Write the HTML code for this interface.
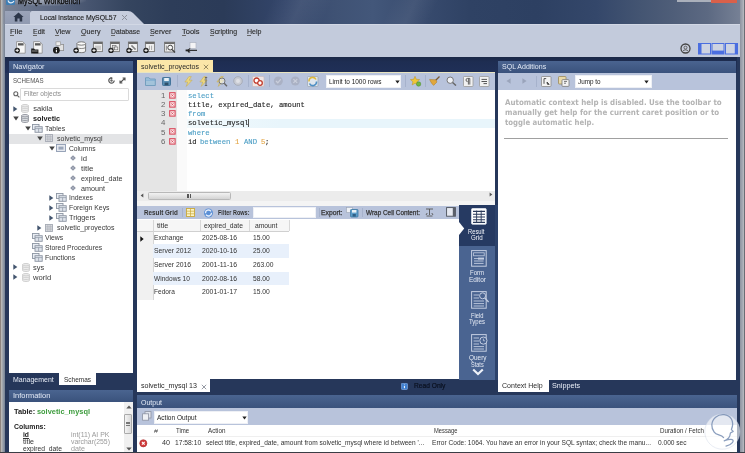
<!DOCTYPE html>
<html lang="en"><head><meta charset="utf-8"><title>MySQL Workbench</title>
<style>
html,body{margin:0;padding:0;}
body{width:745px;height:453px;overflow:hidden;background:#26375a;position:relative;font-family:"Liberation Sans",sans-serif;}
#app{position:absolute;left:0;top:0;width:745px;height:453px;overflow:hidden;will-change:transform;}
#app div,#app span,#app svg{position:absolute;display:block;}
#app span.t{white-space:pre;line-height:10px;height:10px;transform-origin:0 50%;}
</style></head>
<body><div id="app">
<div style="left:0px;top:0px;width:745px;height:24px;background:linear-gradient(90deg,#7d8698 0%,#6c778d 3%,#5b6780 7%,#46546f 12%,#35455f 17%,#2d3d59 23%,#2b3b58 30%,#33456a 38%,#3f5274 45%,#43577a 50%,#394c6f 56%,#2f4264 63%,#2d4062 72%,#34476a 80%,#445572 86%,#4e5d78 90%,#5c6982 95%,#7a8498 100%);"></div>
<div style="left:0px;top:0px;width:745px;height:24px;background:linear-gradient(115deg,rgba(255,255,255,0) 36%,rgba(255,255,255,0.07) 40%,rgba(255,255,255,0) 44%,rgba(255,255,255,0) 52%,rgba(255,255,255,0.06) 55%,rgba(255,255,255,0) 58%);"></div>
<div style="left:8px;top:-7px;width:78px;height:13px;background:radial-gradient(ellipse at center,rgba(255,255,255,0.42) 0%,rgba(255,255,255,0.25) 45%,rgba(255,255,255,0) 75%);"></div>
<div style="left:6px;top:-6px;width:9px;height:10.5px;background:#3f7fb5;border-radius:1px;"></div>
<svg style="left:7px;top:0px;" width="8" height="5" viewBox="0 0 8 5"><path d="M1 0.5 C2 3.5 5 3.8 7 1.2" stroke="#e8f0f8" stroke-width="1.2" fill="none"/></svg>
<span class="t" style="left:17.8px;top:-4px;font-size:8.84px;color:#0c0c0c;font-family:'Liberation Sans', sans-serif;transform:scaleX(0.818);-webkit-text-stroke:0.3px #0c0c0c;">MySQL Workbench</span>
<div style="left:677px;top:0px;width:35px;height:2px;background:#aab0bb;"></div>
<div style="left:711px;top:0px;width:26px;height:2.5px;background:#d9604a;"></div>
<div style="left:5px;top:11px;width:25px;height:13px;background:linear-gradient(#9ba4b9,#909ab1);"></div>
<svg style="left:13px;top:12px;" width="11" height="10" viewBox="0 0 11 10"><path d="M5.5 0.6 L0.4 5 H1.8 V9.4 H4.4 V6.4 H6.6 V9.4 H9.2 V5 H10.6 Z" fill="#2c3649"/></svg>
<svg style="left:30px;top:11px;" width="116" height="13" viewBox="0 0 116 13"><path d="M0 13 V2 Q0 0 2 0 H98 Q101 0 103 2 L114 13 Z" fill="#c6cddd"/></svg>
<span class="t" style="left:39.5px;top:13px;font-size:7.99px;color:#1e1e1e;font-family:'Liberation Sans', sans-serif;transform:scaleX(0.862);-webkit-text-stroke:0.15px #1e1e1e;">Local instance MySQL57</span>
<svg style="left:121px;top:14px;" width="7" height="7" viewBox="0 0 7 7"><path d="M1 1 L6 6 M6 1 L1 6" stroke="#8a8f9a" stroke-width="1" fill="none"/></svg>
<div style="left:5px;top:24px;width:735px;height:32.5px;background:#c3cbdc;"></div>
<div style="left:5px;top:24px;width:735px;height:0.8px;background:rgba(255,255,255,0.25);"></div>
<span class="t" style="left:10px;top:27px;font-size:7.99px;color:#2a2a2a;font-family:'Liberation Sans', sans-serif;transform:scaleX(0.971);-webkit-text-stroke:0.12px #2a2a2a;">File</span>
<div style="left:10px;top:35.1px;width:4px;height:0.7px;background:#666;"></div>
<span class="t" style="left:32.5px;top:27px;font-size:7.99px;color:#2a2a2a;font-family:'Liberation Sans', sans-serif;transform:scaleX(0.872);-webkit-text-stroke:0.12px #2a2a2a;">Edit</span>
<div style="left:32.5px;top:35.1px;width:4px;height:0.7px;background:#666;"></div>
<span class="t" style="left:55px;top:27px;font-size:7.99px;color:#2a2a2a;font-family:'Liberation Sans', sans-serif;transform:scaleX(0.903);-webkit-text-stroke:0.12px #2a2a2a;">View</span>
<div style="left:55px;top:35.1px;width:4px;height:0.7px;background:#666;"></div>
<span class="t" style="left:81px;top:27px;font-size:7.99px;color:#2a2a2a;font-family:'Liberation Sans', sans-serif;transform:scaleX(0.897);-webkit-text-stroke:0.12px #2a2a2a;">Query</span>
<div style="left:81px;top:35.1px;width:4px;height:0.7px;background:#666;"></div>
<span class="t" style="left:111px;top:27px;font-size:7.99px;color:#2a2a2a;font-family:'Liberation Sans', sans-serif;transform:scaleX(0.848);-webkit-text-stroke:0.12px #2a2a2a;">Database</span>
<div style="left:111px;top:35.1px;width:4px;height:0.7px;background:#666;"></div>
<span class="t" style="left:150px;top:27px;font-size:7.99px;color:#2a2a2a;font-family:'Liberation Sans', sans-serif;transform:scaleX(0.914);-webkit-text-stroke:0.12px #2a2a2a;">Server</span>
<div style="left:150px;top:35.1px;width:4px;height:0.7px;background:#666;"></div>
<span class="t" style="left:182px;top:27px;font-size:7.99px;color:#2a2a2a;font-family:'Liberation Sans', sans-serif;transform:scaleX(0.939);-webkit-text-stroke:0.12px #2a2a2a;">Tools</span>
<div style="left:182px;top:35.1px;width:4px;height:0.7px;background:#666;"></div>
<span class="t" style="left:209.5px;top:27px;font-size:7.99px;color:#2a2a2a;font-family:'Liberation Sans', sans-serif;transform:scaleX(0.869);-webkit-text-stroke:0.12px #2a2a2a;">Scripting</span>
<div style="left:209.5px;top:35.1px;width:4px;height:0.7px;background:#666;"></div>
<span class="t" style="left:247px;top:27px;font-size:7.99px;color:#2a2a2a;font-family:'Liberation Sans', sans-serif;transform:scaleX(0.883);-webkit-text-stroke:0.12px #2a2a2a;">Help</span>
<div style="left:247px;top:35.1px;width:4px;height:0.7px;background:#666;"></div>
<svg style="left:13.6px;top:41px;" width="12" height="13" viewBox="0 0 12 13"><path d="M2.6 0.6 H8.6 L11.2 3 V12.2 H2.6 Z" fill="#f6f6f6" stroke="#8a8a8a" stroke-width="0.8"/><rect x="4" y="2.2" width="5.6" height="2.3" fill="#5a5a5a"/><circle cx="3.2" cy="9.4" r="2.7" fill="#1d1d1d"/><path d="M1.6 9.4 H4.800000000000001 M3.2 7.800000000000001 V11.0" stroke="#f2f2f2" stroke-width="1"/></svg>
<svg style="left:31.4px;top:41px;" width="12" height="13" viewBox="0 0 12 13"><path d="M2.6 0.6 H8.6 L11.2 3 V12.2 H2.6 Z" fill="#f6f6f6" stroke="#8a8a8a" stroke-width="0.8"/><rect x="4" y="2.2" width="5.6" height="2.3" fill="#5a5a5a"/><path d="M0.2 12.4 V7.6 H3 L4 8.6 H7.4 V12.4 Z" fill="#1d1d1d"/><path d="M1 10 H6.6" stroke="#ddd" stroke-width="0.6"/></svg>
<svg style="left:52px;top:41px;" width="13" height="13" viewBox="0 0 13 13"><rect x="6" y="3.4" width="5.6" height="6.2" fill="#e2e2e2" stroke="#8f8f8f" stroke-width="0.8"/><rect x="4" y="0.8" width="4.4" height="3.6" fill="#ededed" stroke="#9a9a9a" stroke-width="0.7"/><circle cx="4.4" cy="9.2" r="3.4" fill="#1b1b1b"/><path d="M4.4 7.2 V7.9 M4.4 8.7 V11.2" stroke="#fff" stroke-width="1.1"/></svg>
<svg style="left:73px;top:41px;" width="14" height="13" viewBox="0 0 14 13"><path d="M4 2.4 V10 C4 12.2 12.6 12.2 12.6 10 V2.4" fill="#f4f4f4" stroke="#6c6c6c" stroke-width="0.9"/><ellipse cx="8.3" cy="2.5" rx="4.3" ry="1.7" fill="#fbfbfb" stroke="#6c6c6c" stroke-width="0.9"/><path d="M4 6.1 C4 8 12.6 8 12.6 6.1" fill="none" stroke="#6c6c6c" stroke-width="0.8"/><circle cx="3.1" cy="9.5" r="2.7" fill="#1d1d1d"/><path d="M1.5 9.5 H4.7 M3.1 7.9 V11.1" stroke="#f2f2f2" stroke-width="1"/></svg>
<svg style="left:90.6px;top:41px;" width="12" height="13" viewBox="0 0 12 13"><rect x="2.4" y="1" width="9" height="9.6" fill="#f1f1f1" stroke="#7a7a7a" stroke-width="0.9"/><rect x="2.4" y="1" width="9" height="2" fill="#6a6a6a"/><path d="M5 4.6 V9 M7 4.6 V9 M9 4.6 V9" stroke="#999" stroke-width="0.9"/><circle cx="3" cy="9.4" r="2.7" fill="#1d1d1d"/><path d="M1.4 9.4 H4.6 M3 7.800000000000001 V11.0" stroke="#f2f2f2" stroke-width="1"/></svg>
<svg style="left:108.4px;top:41px;" width="12" height="13" viewBox="0 0 12 13"><rect x="2.4" y="1" width="9" height="9.6" fill="#f1f1f1" stroke="#7a7a7a" stroke-width="0.9"/><rect x="2.4" y="1" width="9" height="2" fill="#6a6a6a"/><rect x="4.6" y="4.4" width="3.4" height="2.6" fill="#ddd" stroke="#666" stroke-width="0.6"/><rect x="6.4" y="6" width="3.4" height="2.8" fill="#eee" stroke="#666" stroke-width="0.6"/><circle cx="3" cy="9.4" r="2.7" fill="#1d1d1d"/><path d="M1.4 9.4 H4.6 M3 7.800000000000001 V11.0" stroke="#f2f2f2" stroke-width="1"/></svg>
<svg style="left:125.6px;top:41px;" width="12" height="13" viewBox="0 0 12 13"><rect x="2.4" y="1" width="9" height="9.6" fill="#f1f1f1" stroke="#7a7a7a" stroke-width="0.9"/><rect x="2.4" y="1" width="9" height="2" fill="#6a6a6a"/><path d="M5 5 H7 V7 H9 V9" stroke="#555" stroke-width="0.9" fill="none"/><path d="M5 8.6 H6.6" stroke="#555" stroke-width="0.9"/><circle cx="3" cy="9.4" r="2.7" fill="#1d1d1d"/><path d="M1.4 9.4 H4.6 M3 7.800000000000001 V11.0" stroke="#f2f2f2" stroke-width="1"/></svg>
<svg style="left:143px;top:41px;" width="12" height="13" viewBox="0 0 12 13"><rect x="2.4" y="1" width="9" height="9.6" fill="#f1f1f1" stroke="#7a7a7a" stroke-width="0.9"/><rect x="2.4" y="1" width="9" height="2" fill="#6a6a6a"/><path d="M6.4 4.6 V9 M8.6 4.6 V9" stroke="#aaa" stroke-width="1"/><circle cx="3" cy="9.4" r="2.7" fill="#1d1d1d"/><path d="M1.4 9.4 H4.6 M3 7.800000000000001 V11.0" stroke="#f2f2f2" stroke-width="1"/></svg>
<svg style="left:164px;top:41px;" width="13" height="13" viewBox="0 0 13 13"><rect x="0.6" y="1.2" width="10" height="9.8" fill="#efefef" stroke="#777" stroke-width="0.9"/><rect x="0.6" y="1.2" width="10" height="1.8" fill="#6a6a6a"/><circle cx="6.2" cy="6.6" r="2.4" fill="#fafafa" stroke="#444" stroke-width="1"/><path d="M8 8.4 L11 11.4" stroke="#444" stroke-width="1.4"/><path d="M2.4 4.6 V9.4" stroke="#777" stroke-width="0.8"/></svg>
<svg style="left:185px;top:41px;" width="14" height="13" viewBox="0 0 14 13"><rect x="5" y="1.6" width="6" height="6" fill="#f4f4f6" stroke="#aeb4c2" stroke-width="0.7"/><path d="M12 9.4 H3 M5.2 7.4 L2.6 9.4 L5.2 11.4" stroke="#333" stroke-width="1.1" fill="none"/><path d="M0.6 9.4 H4" stroke="#222" stroke-width="1.8"/><path d="M3 9.4 L3.8 11.6" stroke="#222" stroke-width="1"/></svg>
<svg style="left:680px;top:42.5px;" width="11" height="11" viewBox="0 0 11 11"><circle cx="5.5" cy="5.5" r="4.5" fill="#c9cfdd" stroke="#444" stroke-width="1.3"/><circle cx="5.5" cy="4.6" r="1.5" fill="none" stroke="#555" stroke-width="0.9"/><path d="M2.8 8.2 C3.5 6.4 7.5 6.4 8.2 8.2" fill="none" stroke="#555" stroke-width="0.9"/></svg>
<svg style="left:698px;top:42.5px;" width="41" height="12" viewBox="0 0 41 12">
<rect x="0.5" y="0.5" width="12" height="10.5" fill="#cdd3e2" stroke="#4a6ee0" stroke-width="1"/><rect x="0.5" y="0.5" width="3" height="10.5" fill="#4a6ee0"/>
<rect x="14" y="0.5" width="12" height="10.5" fill="#cdd3e2" stroke="#4a6ee0" stroke-width="1"/><rect x="14" y="7.6" width="12" height="3.4" fill="#4a6ee0"/>
<rect x="27.5" y="0.5" width="12" height="10.5" fill="#cdd3e2" stroke="#4a6ee0" stroke-width="1"/><rect x="36.8" y="0.5" width="2.7" height="10.5" fill="#4a6ee0"/>
</svg>
<div style="left:5px;top:56.5px;width:735px;height:397px;background:#26375a;"></div>
<div style="left:5px;top:56.5px;width:735px;height:16.5px;background:linear-gradient(#1b2947,#1e2d52 30%,#203058);"></div>
<div style="left:8.7px;top:61px;width:124.1px;height:312.3px;background:#fff;"></div>
<div style="left:8.7px;top:389.5px;width:124.1px;height:63.5px;background:#fff;"></div>
<div style="left:136.5px;top:72.3px;width:358.8px;height:307.2px;background:#fff;"></div>
<div style="left:497.8px;top:61px;width:238.7px;height:318.5px;background:#fff;"></div>
<div style="left:136.5px;top:395px;width:603.5px;height:58px;background:#fff;"></div>
<div style="left:0px;top:0px;width:2.6px;height:453px;background:linear-gradient(90deg,#8e847e 0,#8e847e 0.9px,#b6b6b6 1.2px,#b9b9b9 2.2px,#9aa0a8 2.6px);"></div>
<div style="left:2.6px;top:24px;width:2.4px;height:429px;background:linear-gradient(90deg,#939ca9,#8792a1 60%,#6d7888);"></div>
<div style="left:2.6px;top:0px;width:2.4px;height:24px;background:linear-gradient(90deg,#8d95a3,#7d8698);"></div>
<div style="left:740px;top:0px;width:5px;height:453px;background:linear-gradient(90deg,#8d93a0,#a4a9b3 50%,#c9cbd0 65%,#8a8d95 80%,#4a4d55);"></div>
<div style="left:8.7px;top:61px;width:124.1px;height:12px;background:linear-gradient(#4a6490,#3a527c);"></div>
<span class="t" style="left:13px;top:62px;font-size:7.99px;color:#e3eaf6;font-family:'Liberation Sans', sans-serif;transform:scaleX(0.922);">Navigator</span>
<div style="left:8.7px;top:73px;width:124.1px;height:300.3px;background:#fff;"></div>
<span class="t" style="left:12.5px;top:76px;font-size:7.52px;color:#555;font-family:'Liberation Sans', sans-serif;transform:scaleX(0.821);">SCHEMAS</span>
<svg style="left:108px;top:77px;" width="7" height="7" viewBox="0 0 7 7"><path d="M3.5 0.8 A2.7 2.7 0 1 0 6.2 3.5" fill="none" stroke="#555" stroke-width="1.2"/><path d="M2.6 0 L5 1 L3 2.6 Z" fill="#555"/><circle cx="3.5" cy="3.5" r="1.2" fill="#666"/></svg>
<svg style="left:119px;top:77px;" width="7" height="7" viewBox="0 0 7 7"><path d="M1 6 L6 1 M3.6 1 H6 V3.4 M1 3.6 V6 H3.4" stroke="#555" stroke-width="1.1" fill="none"/></svg>
<div style="left:20px;top:87.5px;width:108.5px;height:13px;background:#fff;border:1px solid #dadada;box-sizing:border-box;border-radius:1px;"></div>
<svg style="left:12.5px;top:90.5px;" width="7" height="7" viewBox="0 0 7 7"><circle cx="2.8" cy="2.8" r="2" fill="none" stroke="#666" stroke-width="1.1"/><path d="M4.3 4.3 L6.4 6.4" stroke="#666" stroke-width="1.2"/></svg>
<span class="t" style="left:23.5px;top:89px;font-size:7.52px;color:#8a8a8a;font-family:'Liberation Sans', sans-serif;transform:scaleX(0.868);">Filter objects</span>
<div style="left:8.7px;top:134.29999999999998px;width:124.1px;height:9.6px;background:#e3e4e6;"></div>
<svg style="left:13px;top:105.7px;" width="5" height="6" viewBox="0 0 5 6"><path d="M0.3 0.3 L4.4 3 L0.3 5.7 Z" fill="#44566f"/></svg>
<svg style="left:21px;top:104.2px;" width="8" height="9" viewBox="0 0 8 9"><path d="M0.6 1.6 V7.4 C0.6 8.8 7.4 8.8 7.4 7.4 V1.6" fill="#eeeeee" stroke="#c9c9c9" stroke-width="0.9"/><ellipse cx="4" cy="1.7" rx="3.4" ry="1.2" fill="#eeeeee" stroke="#c9c9c9" stroke-width="0.9"/><path d="M0.6 3.6 C0.6 5 7.4 5 7.4 3.6 M0.6 5.5 C0.6 6.9 7.4 6.9 7.4 5.5" fill="none" stroke="#c9c9c9" stroke-width="0.8"/></svg>
<span class="t" style="left:33.3px;top:104px;font-size:7.52px;color:#3a3a3a;font-family:'Liberation Sans', sans-serif;">sakila</span>
<svg style="left:12.7px;top:116.12px;" width="6" height="5" viewBox="0 0 6 5"><path d="M0.2 0.5 H5.8 L3 4.6 Z" fill="#444"/></svg>
<svg style="left:21px;top:114.12px;" width="8" height="9" viewBox="0 0 8 9"><path d="M0.6 1.6 V7.4 C0.6 8.8 7.4 8.8 7.4 7.4 V1.6" fill="#e0e2e6" stroke="#8c9099" stroke-width="0.9"/><ellipse cx="4" cy="1.7" rx="3.4" ry="1.2" fill="#e0e2e6" stroke="#8c9099" stroke-width="0.9"/><path d="M0.6 3.6 C0.6 5 7.4 5 7.4 3.6 M0.6 5.5 C0.6 6.9 7.4 6.9 7.4 5.5" fill="none" stroke="#8c9099" stroke-width="0.8"/></svg>
<span class="t" style="left:33.3px;top:114px;font-size:7.52px;color:#222;font-family:'Liberation Sans', sans-serif;font-weight:700;transform:scaleX(0.971);">solvetic</span>
<svg style="left:25px;top:126.03999999999999px;" width="6" height="5" viewBox="0 0 6 5"><path d="M0.2 0.5 H5.8 L3 4.6 Z" fill="#444"/></svg>
<svg style="left:32px;top:124.03999999999999px;" width="11" height="9" viewBox="0 0 11 9"><rect x="0.5" y="0.5" width="6.5" height="5" fill="#e9edf3" stroke="#8d95a3" stroke-width="0.9"/><rect x="3" y="2.7" width="7.2" height="5.6" fill="#dfe4ec" stroke="#8d95a3" stroke-width="0.9"/><path d="M3 4.6 H10.2 M6.6 4.6 V8.3" stroke="#8d95a3" stroke-width="0.7"/></svg>
<span class="t" style="left:45.3px;top:124px;font-size:7.52px;color:#3a3a3a;font-family:'Liberation Sans', sans-serif;transform:scaleX(0.929);">Tables</span>
<svg style="left:37px;top:135.95999999999998px;" width="6" height="5" viewBox="0 0 6 5"><path d="M0.2 0.5 H5.8 L3 4.6 Z" fill="#444"/></svg>
<svg style="left:45px;top:134.45999999999998px;" width="8" height="8" viewBox="0 0 8 8"><rect x="0.5" y="0.5" width="7" height="7" fill="#d8dade" stroke="#a6abb4" stroke-width="0.9"/><path d="M0.5 2.8 H7.5 M0.5 5.1 H7.5 M2.8 0.5 V7.5 M5.2 0.5 V7.5" stroke="#a6abb4" stroke-width="0.6"/></svg>
<span class="t" style="left:57px;top:134px;font-size:7.52px;color:#3a3a3a;font-family:'Liberation Sans', sans-serif;transform:scaleX(0.931);">solvetic_mysql</span>
<svg style="left:49px;top:145.88px;" width="6" height="5" viewBox="0 0 6 5"><path d="M0.2 0.5 H5.8 L3 4.6 Z" fill="#444"/></svg>
<svg style="left:56px;top:144.38px;" width="10" height="8" viewBox="0 0 10 8"><rect x="0.5" y="0.5" width="9" height="7" fill="#e6e9ef" stroke="#8e9bb1" stroke-width="0.9"/><rect x="2.5" y="2.6" width="5" height="3" fill="#9aa6ba"/></svg>
<span class="t" style="left:69px;top:144px;font-size:7.52px;color:#3a3a3a;font-family:'Liberation Sans', sans-serif;transform:scaleX(0.894);">Columns</span>
<svg style="left:69.6px;top:154.79999999999998px;" width="6" height="6" viewBox="0 0 6 6"><path d="M3 0.2 L5.8 3 L3 5.8 L0.2 3 Z" fill="#8b92a3"/><path d="M3 1.6 L4.4 3 L3 4.4 L1.6 3 Z" fill="#a9afbd"/></svg>
<span class="t" style="left:80.5px;top:154px;font-size:7.52px;color:#3a3a3a;font-family:'Liberation Sans', sans-serif;transform:scaleX(1.024);">id</span>
<svg style="left:69.6px;top:164.71999999999997px;" width="6" height="6" viewBox="0 0 6 6"><path d="M3 0.2 L5.8 3 L3 5.8 L0.2 3 Z" fill="#8b92a3"/><path d="M3 1.6 L4.4 3 L3 4.4 L1.6 3 Z" fill="#a9afbd"/></svg>
<span class="t" style="left:80.5px;top:164px;font-size:7.52px;color:#3a3a3a;font-family:'Liberation Sans', sans-serif;transform:scaleX(1.068);">title</span>
<svg style="left:69.6px;top:174.64px;" width="6" height="6" viewBox="0 0 6 6"><path d="M3 0.2 L5.8 3 L3 5.8 L0.2 3 Z" fill="#8b92a3"/><path d="M3 1.6 L4.4 3 L3 4.4 L1.6 3 Z" fill="#a9afbd"/></svg>
<span class="t" style="left:80.5px;top:174px;font-size:7.52px;color:#3a3a3a;font-family:'Liberation Sans', sans-serif;transform:scaleX(0.955);">expired_date</span>
<svg style="left:69.6px;top:184.56px;" width="6" height="6" viewBox="0 0 6 6"><path d="M3 0.2 L5.8 3 L3 5.8 L0.2 3 Z" fill="#8b92a3"/><path d="M3 1.6 L4.4 3 L3 4.4 L1.6 3 Z" fill="#a9afbd"/></svg>
<span class="t" style="left:80.5px;top:184px;font-size:7.52px;color:#3a3a3a;font-family:'Liberation Sans', sans-serif;transform:scaleX(0.957);">amount</span>
<svg style="left:49px;top:194.78px;" width="5" height="6" viewBox="0 0 5 6"><path d="M0.3 0.3 L4.4 3 L0.3 5.7 Z" fill="#44566f"/></svg>
<svg style="left:55.5px;top:192.98px;" width="11" height="9" viewBox="0 0 11 9"><rect x="0.5" y="0.5" width="6.5" height="5" fill="#e9edf3" stroke="#8d95a3" stroke-width="0.9"/><rect x="3" y="2.7" width="7.2" height="5.6" fill="#dfe4ec" stroke="#8d95a3" stroke-width="0.9"/><path d="M3 4.6 H10.2 M6.6 4.6 V8.3" stroke="#8d95a3" stroke-width="0.7"/></svg>
<span class="t" style="left:69px;top:193px;font-size:7.52px;color:#3a3a3a;font-family:'Liberation Sans', sans-serif;transform:scaleX(0.912);">Indexes</span>
<svg style="left:49px;top:204.7px;" width="5" height="6" viewBox="0 0 5 6"><path d="M0.3 0.3 L4.4 3 L0.3 5.7 Z" fill="#44566f"/></svg>
<svg style="left:55.5px;top:202.89999999999998px;" width="11" height="9" viewBox="0 0 11 9"><rect x="0.5" y="0.5" width="6.5" height="5" fill="#e9edf3" stroke="#8d95a3" stroke-width="0.9"/><rect x="3" y="2.7" width="7.2" height="5.6" fill="#dfe4ec" stroke="#8d95a3" stroke-width="0.9"/><path d="M3 4.6 H10.2 M6.6 4.6 V8.3" stroke="#8d95a3" stroke-width="0.7"/></svg>
<span class="t" style="left:69px;top:203px;font-size:7.52px;color:#3a3a3a;font-family:'Liberation Sans', sans-serif;transform:scaleX(0.915);">Foreign Keys</span>
<svg style="left:49px;top:214.62px;" width="5" height="6" viewBox="0 0 5 6"><path d="M0.3 0.3 L4.4 3 L0.3 5.7 Z" fill="#44566f"/></svg>
<svg style="left:55.5px;top:212.82px;" width="11" height="9" viewBox="0 0 11 9"><rect x="0.5" y="0.5" width="6.5" height="5" fill="#e9edf3" stroke="#8d95a3" stroke-width="0.9"/><rect x="3" y="2.7" width="7.2" height="5.6" fill="#dfe4ec" stroke="#8d95a3" stroke-width="0.9"/><path d="M3 4.6 H10.2 M6.6 4.6 V8.3" stroke="#8d95a3" stroke-width="0.7"/></svg>
<span class="t" style="left:69px;top:213px;font-size:7.52px;color:#3a3a3a;font-family:'Liberation Sans', sans-serif;transform:scaleX(0.971);">Triggers</span>
<svg style="left:37px;top:224.54px;" width="5" height="6" viewBox="0 0 5 6"><path d="M0.3 0.3 L4.4 3 L0.3 5.7 Z" fill="#44566f"/></svg>
<svg style="left:45px;top:223.54px;" width="8" height="8" viewBox="0 0 8 8"><rect x="0.5" y="0.5" width="7" height="7" fill="#d8dade" stroke="#a6abb4" stroke-width="0.9"/><path d="M0.5 2.8 H7.5 M0.5 5.1 H7.5 M2.8 0.5 V7.5 M5.2 0.5 V7.5" stroke="#a6abb4" stroke-width="0.6"/></svg>
<span class="t" style="left:57px;top:223px;font-size:7.52px;color:#3a3a3a;font-family:'Liberation Sans', sans-serif;transform:scaleX(0.930);">solvetic_proyectos</span>
<svg style="left:32px;top:232.96px;" width="11" height="9" viewBox="0 0 11 9"><rect x="0.5" y="0.5" width="6.5" height="5" fill="#e9edf3" stroke="#8d95a3" stroke-width="0.9"/><rect x="3" y="2.7" width="7.2" height="5.6" fill="#dfe4ec" stroke="#8d95a3" stroke-width="0.9"/><path d="M3 4.6 H10.2 M6.6 4.6 V8.3" stroke="#8d95a3" stroke-width="0.7"/></svg>
<span class="t" style="left:45.3px;top:233px;font-size:7.52px;color:#3a3a3a;font-family:'Liberation Sans', sans-serif;transform:scaleX(0.914);">Views</span>
<svg style="left:32px;top:242.88px;" width="11" height="9" viewBox="0 0 11 9"><rect x="0.5" y="0.5" width="6.5" height="5" fill="#e9edf3" stroke="#8d95a3" stroke-width="0.9"/><rect x="3" y="2.7" width="7.2" height="5.6" fill="#dfe4ec" stroke="#8d95a3" stroke-width="0.9"/><path d="M3 4.6 H10.2 M6.6 4.6 V8.3" stroke="#8d95a3" stroke-width="0.7"/></svg>
<span class="t" style="left:45.3px;top:243px;font-size:7.52px;color:#3a3a3a;font-family:'Liberation Sans', sans-serif;transform:scaleX(0.913);">Stored Procedures</span>
<svg style="left:32px;top:252.8px;" width="11" height="9" viewBox="0 0 11 9"><rect x="0.5" y="0.5" width="6.5" height="5" fill="#e9edf3" stroke="#8d95a3" stroke-width="0.9"/><rect x="3" y="2.7" width="7.2" height="5.6" fill="#dfe4ec" stroke="#8d95a3" stroke-width="0.9"/><path d="M3 4.6 H10.2 M6.6 4.6 V8.3" stroke="#8d95a3" stroke-width="0.7"/></svg>
<span class="t" style="left:45.3px;top:253px;font-size:7.52px;color:#3a3a3a;font-family:'Liberation Sans', sans-serif;transform:scaleX(0.927);">Functions</span>
<svg style="left:13px;top:264.22px;" width="5" height="6" viewBox="0 0 5 6"><path d="M0.3 0.3 L4.4 3 L0.3 5.7 Z" fill="#44566f"/></svg>
<svg style="left:21.5px;top:262.72px;" width="8" height="9" viewBox="0 0 8 9"><path d="M0.6 1.6 V7.4 C0.6 8.8 7.4 8.8 7.4 7.4 V1.6" fill="#eeeeee" stroke="#c9c9c9" stroke-width="0.9"/><ellipse cx="4" cy="1.7" rx="3.4" ry="1.2" fill="#eeeeee" stroke="#c9c9c9" stroke-width="0.9"/><path d="M0.6 3.6 C0.6 5 7.4 5 7.4 3.6 M0.6 5.5 C0.6 6.9 7.4 6.9 7.4 5.5" fill="none" stroke="#c9c9c9" stroke-width="0.8"/></svg>
<span class="t" style="left:33.3px;top:263px;font-size:7.52px;color:#3a3a3a;font-family:'Liberation Sans', sans-serif;transform:scaleX(0.993);">sys</span>
<svg style="left:13px;top:274.14px;" width="5" height="6" viewBox="0 0 5 6"><path d="M0.3 0.3 L4.4 3 L0.3 5.7 Z" fill="#44566f"/></svg>
<svg style="left:21.5px;top:272.64px;" width="8" height="9" viewBox="0 0 8 9"><path d="M0.6 1.6 V7.4 C0.6 8.8 7.4 8.8 7.4 7.4 V1.6" fill="#eeeeee" stroke="#c9c9c9" stroke-width="0.9"/><ellipse cx="4" cy="1.7" rx="3.4" ry="1.2" fill="#eeeeee" stroke="#c9c9c9" stroke-width="0.9"/><path d="M0.6 3.6 C0.6 5 7.4 5 7.4 3.6 M0.6 5.5 C0.6 6.9 7.4 6.9 7.4 5.5" fill="none" stroke="#c9c9c9" stroke-width="0.8"/></svg>
<span class="t" style="left:33.3px;top:273px;font-size:7.52px;color:#3a3a3a;font-family:'Liberation Sans', sans-serif;transform:scaleX(1.013);">world</span>
<span class="t" style="left:12.8px;top:375px;font-size:7.52px;color:#e8edf7;font-family:'Liberation Sans', sans-serif;transform:scaleX(0.928);">Management</span>
<div style="left:59px;top:372.5px;width:37px;height:12.8px;background:#fff;"></div>
<span class="t" style="left:63.5px;top:375px;font-size:7.52px;color:#2d2d2d;font-family:'Liberation Sans', sans-serif;transform:scaleX(0.861);">Schemas</span>
<div style="left:8.7px;top:389.5px;width:124.1px;height:12.5px;background:linear-gradient(#4a6490,#3a527c);"></div>
<span class="t" style="left:13.2px;top:391px;font-size:7.99px;color:#e3eaf6;font-family:'Liberation Sans', sans-serif;transform:scaleX(0.934);">Information</span>
<div style="left:8.7px;top:402px;width:124.1px;height:51px;background:#fff;"></div>
<span class="t" style="left:13.8px;top:407px;font-size:7.52px;color:#222;font-family:'Liberation Sans', sans-serif;font-weight:700;transform:scaleX(0.982);">Table:</span>
<span class="t" style="left:37px;top:407px;font-size:7.52px;color:#3d9c3d;font-family:'Liberation Sans', sans-serif;font-weight:700;transform:scaleX(0.983);">solvetic_mysql</span>
<span class="t" style="left:13.8px;top:422px;font-size:7.52px;color:#222;font-family:'Liberation Sans', sans-serif;font-weight:700;transform:scaleX(0.915);">Columns:</span>
<span class="t" style="left:22.5px;top:430px;font-size:7.52px;color:#222;font-family:'Liberation Sans', sans-serif;font-weight:700;transform:scaleX(0.897);">id</span>
<div style="left:22.5px;top:437.8px;width:6px;height:0.7px;background:#333;"></div>
<span class="t" style="left:70.5px;top:430px;font-size:7.52px;color:#9a9a9a;font-family:'Liberation Sans', sans-serif;transform:scaleX(0.925);">int(11) AI PK</span>
<span class="t" style="left:22.5px;top:437px;font-size:7.52px;color:#333;font-family:'Liberation Sans', sans-serif;transform:scaleX(0.940);">title</span>
<span class="t" style="left:70.5px;top:437px;font-size:7.52px;color:#9a9a9a;font-family:'Liberation Sans', sans-serif;transform:scaleX(0.915);">varchar(255)</span>
<span class="t" style="left:22.5px;top:444px;font-size:7.52px;color:#333;font-family:'Liberation Sans', sans-serif;transform:scaleX(0.897);">expired_date</span>
<span class="t" style="left:70.5px;top:444px;font-size:7.52px;color:#9a9a9a;font-family:'Liberation Sans', sans-serif;transform:scaleX(0.956);">date</span>
<div style="left:123.5px;top:402px;width:9.3px;height:51px;background:#f0f0f0;"></div>
<svg style="left:125.5px;top:405px;" width="6" height="4" viewBox="0 0 6 4"><path d="M0.3 3.6 L3 0.6 L5.7 3.6 Z" fill="#555"/></svg>
<div style="left:124px;top:413.5px;width:8.3px;height:20px;background:linear-gradient(90deg,#f4f4f4,#d8d8d8);border:1px solid #aaa;box-sizing:border-box;border-radius:1px;"></div>
<div style="left:126px;top:421.5px;width:4.3px;height:0.7px;background:#777;"></div>
<div style="left:126px;top:423.3px;width:4.3px;height:0.7px;background:#777;"></div>
<div style="left:126px;top:425.1px;width:4.3px;height:0.7px;background:#777;"></div>
<svg style="left:125.5px;top:447px;" width="6" height="4" viewBox="0 0 6 4"><path d="M0.3 0.4 L3 3.4 L5.7 0.4 Z" fill="#555"/></svg>
<div style="left:137px;top:60px;width:75.5px;height:12.3px;background:#fbe6a8;"></div>
<span class="t" style="left:141px;top:62px;font-size:7.8px;color:#2a2a2a;font-family:'Liberation Sans', sans-serif;transform:scaleX(0.904);">solvetic_proyectos</span>
<svg style="left:203px;top:63.5px;" width="6" height="6" viewBox="0 0 6 6"><path d="M0.8 0.8 L5.2 5.2 M5.2 0.8 L0.8 5.2" stroke="#8a7f5a" stroke-width="0.9" fill="none"/></svg>
<div style="left:136.5px;top:72.3px;width:358.8px;height:17.4px;background:#b8c3db;"></div>
<div style="left:136.5px;top:72.3px;width:358.8px;height:0.9px;background:#e8e4c0;"></div>
<div style="left:136.5px;top:89.7px;width:358.8px;height:101.3px;background:#fff;"></div>
<div style="left:136.5px;top:89.7px;width:40.5px;height:101.3px;background:#e5e5e5;"></div>
<div style="left:177px;top:89.7px;width:9.5px;height:101.3px;background:#fafafa;"></div>
<div style="left:186.5px;top:118.8px;width:308.8px;height:8.8px;background:linear-gradient(90deg,#f2fafd,#e8f5fb 30%);"></div>
<svg style="left:144.5px;top:76.5px;" width="11" height="9" viewBox="0 0 11 9"><path d="M0.5 8.5 V0.8 H4 L5 2 H10.3 V8.5 Z" fill="#a3c3da" stroke="#6d9abb" stroke-width="0.9"/><path d="M0.8 3.2 H10" stroke="#6fa3cf" stroke-width="0.7"/></svg>
<svg style="left:162px;top:76.5px;" width="9" height="9" viewBox="0 0 9 9"><rect x="0.5" y="0.5" width="8" height="8" rx="0.8" fill="#5b8fb5" stroke="#3d6f96" stroke-width="0.9"/><rect x="2.2" y="1" width="4.6" height="3" fill="#e8f0f6"/><rect x="2.6" y="5.6" width="3.8" height="2.6" fill="#2f4f6a"/></svg>
<div style="left:176.8px;top:75px;width:0.8px;height:12px;background:#a6b2cc;"></div>
<svg style="left:183px;top:75.5px;" width="10" height="11" viewBox="0 0 10 11"><path d="M5.9 0.6 L1.9 6.0 H4.7 L3.3 10.4 L9.1 4.2 H6.1 L8.3 0.6 Z" fill="#ecd77e" stroke="#c4ac5c" stroke-width="0.6"/></svg>
<svg style="left:199px;top:75.5px;" width="10" height="11" viewBox="0 0 10 11"><path d="M4.9 0.6 L0.9 6.0 H3.7 L2.3 10.4 L8.1 4.2 H5.1 L7.3 0.6 Z" fill="#ecd77e" stroke="#c4ac5c" stroke-width="0.6"/><path d="M7 1.5 V9.5 M5.8 1.5 H8.2 M5.8 9.5 H8.2" stroke="#555" stroke-width="0.8"/></svg>
<svg style="left:215.5px;top:75.5px;" width="12" height="11" viewBox="0 0 12 11"><path d="M4.9 0.6 L0.9 6.0 H3.7 L2.3 10.4 L8.1 4.2 H5.1 L7.3 0.6 Z" fill="#ecd77e" stroke="#c4ac5c" stroke-width="0.6"/><circle cx="6" cy="5" r="3" fill="rgba(235,240,250,0.6)" stroke="#777" stroke-width="1"/><path d="M8.2 7.2 L11 10.2" stroke="#666" stroke-width="1.3"/></svg>
<svg style="left:233px;top:76px;" width="10" height="10" viewBox="0 0 10 10"><circle cx="5" cy="5" r="4.3" fill="#c9ccd4" stroke="#a4a8b3" stroke-width="0.9"/><circle cx="5" cy="5" r="2" fill="#dfe1e6"/></svg>
<div style="left:247.5px;top:75px;width:0.8px;height:12px;background:#a6b2cc;"></div>
<svg style="left:252px;top:75.5px;" width="13" height="11" viewBox="0 0 13 11"><rect x="0.5" y="0.5" width="11.5" height="10" rx="1" fill="#f0e6e4" stroke="#c9b8b8" stroke-width="0.6"/><circle cx="4.6" cy="4.6" r="2.6" fill="#fff" stroke="#c0392b" stroke-width="1.3"/><circle cx="8" cy="7" r="2.3" fill="#fff" stroke="#c0392b" stroke-width="1.3"/></svg>
<div style="left:268.5px;top:75px;width:0.8px;height:12px;background:#a6b2cc;"></div>
<svg style="left:273px;top:76px;" width="11" height="10" viewBox="0 0 11 10"><circle cx="5.3" cy="5" r="4.5" fill="#aab1c4"/><path d="M3 5 L4.8 6.8 L7.8 3.2" stroke="#c9cedb" stroke-width="1.3" fill="none"/></svg>
<svg style="left:290px;top:76px;" width="11" height="10" viewBox="0 0 11 10"><circle cx="5.3" cy="5" r="4.5" fill="#aab1c4"/><path d="M3.4 3.1 L7.2 6.9 M7.2 3.1 L3.4 6.9" stroke="#c9cedb" stroke-width="1.3" fill="none"/></svg>
<svg style="left:306.5px;top:75.5px;" width="12" height="11" viewBox="0 0 12 11"><rect x="0.5" y="0.5" width="10.5" height="10" rx="1" fill="#dfe6ee" stroke="#9aa3b0" stroke-width="0.7"/><path d="M2 5.5 A3.7 3.7 0 0 1 9 3.5" fill="none" stroke="#e0b93c" stroke-width="1.6"/><path d="M9.5 5.5 A3.7 3.7 0 0 1 2.5 7.5" fill="none" stroke="#4f8fc4" stroke-width="1.6"/></svg>
<div style="left:326px;top:74.5px;width:75.3px;height:13.2px;background:#fff;border:1px solid #eef0f5;box-sizing:border-box;"></div>
<span class="t" style="left:329px;top:77px;font-size:7.52px;color:#222;font-family:'Liberation Sans', sans-serif;transform:scaleX(0.861);">Limit to 1000 rows</span>
<svg style="left:394.5px;top:79.5px;" width="5" height="4" viewBox="0 0 5 4"><path d="M0.3 0.5 H4.7 L2.5 3.4 Z" fill="#222"/></svg>
<div style="left:405px;top:75px;width:0.8px;height:12px;background:#a6b2cc;"></div>
<svg style="left:409.5px;top:76px;" width="12" height="11" viewBox="0 0 12 11"><path d="M5 0.3 L6.3 3.3 L9.6 3.6 L7.1 5.8 L7.9 9 L5 7.3 L2.1 9 L2.9 5.8 L0.4 3.6 L3.7 3.3 Z" fill="#f0c636" stroke="#b8902a" stroke-width="0.5"/><circle cx="8.6" cy="8" r="2.2" fill="#6fb544" stroke="#4c8c2c" stroke-width="0.5"/></svg>
<div style="left:424.8px;top:75px;width:0.8px;height:12px;background:#a6b2cc;"></div>
<svg style="left:429px;top:76px;" width="12" height="10" viewBox="0 0 12 10"><path d="M10.5 0.5 L6.5 4.5" stroke="#7a5a30" stroke-width="1.3"/><path d="M0.6 3.4 L6.8 3.8 L8 6 L4.6 9.4 C3 8 1.6 6 0.6 3.4 Z" fill="#e0a73c" stroke="#a97a2a" stroke-width="0.5"/></svg>
<svg style="left:445.5px;top:76px;" width="11" height="10" viewBox="0 0 11 10"><circle cx="4.2" cy="4.2" r="3.2" fill="#eef1f7" stroke="#777" stroke-width="1"/><path d="M6.6 6.6 L10 9.6" stroke="#666" stroke-width="1.4"/></svg>
<svg style="left:462.5px;top:75.5px;" width="11" height="11" viewBox="0 0 11 11"><rect x="0.5" y="0.5" width="9.5" height="10" rx="0.8" fill="#f1f1f1" stroke="#999" stroke-width="0.8"/><path d="M6.8 2.4 H4.6 A1.6 1.6 0 0 0 4.6 5.6 M5.4 2.4 V8.6 M6.8 2.4 V8.6" stroke="#555" stroke-width="0.9" fill="none"/></svg>
<svg style="left:479px;top:75.5px;" width="11" height="11" viewBox="0 0 11 11"><rect x="0.5" y="0.5" width="9.5" height="10" rx="0.8" fill="#f1f1f1" stroke="#999" stroke-width="0.8"/><path d="M2.5 3.4 H8 M2.5 5.5 H8 M4.5 7.6 H8" stroke="#555" stroke-width="1"/></svg>
<span class="t" style="left:187.5px;top:91px;font-size:7.6px;color:#4a9dc4;font-family:'Liberation Mono', monospace;transform:scaleX(0.950);-webkit-text-stroke:0.12px #4a9dc4;">select</span>
<span class="t" style="left:187.5px;top:100px;font-size:7.6px;color:#1c1c1c;font-family:'Liberation Mono', monospace;transform:scaleX(0.950);-webkit-text-stroke:0.12px #1c1c1c;">title, expired_date, amount</span>
<span class="t" style="left:187.5px;top:109px;font-size:7.6px;color:#4a9dc4;font-family:'Liberation Mono', monospace;transform:scaleX(0.950);-webkit-text-stroke:0.12px #4a9dc4;">from</span>
<span class="t" style="left:187.5px;top:118px;font-size:7.6px;color:#1c1c1c;font-family:'Liberation Mono', monospace;transform:scaleX(0.950);-webkit-text-stroke:0.12px #1c1c1c;">solvetic_mysql</span>
<span class="t" style="left:187.5px;top:128px;font-size:7.6px;color:#4a9dc4;font-family:'Liberation Mono', monospace;transform:scaleX(0.950);-webkit-text-stroke:0.12px #4a9dc4;">where</span>
<span class="t" style="left:187.5px;top:137px;font-size:7.6px;color:#1c1c1c;font-family:'Liberation Mono', monospace;transform:scaleX(0.950);-webkit-text-stroke:0.12px #1c1c1c;">id </span>
<span class="t" style="left:200.49px;top:137px;font-size:7.6px;color:#4a9dc4;font-family:'Liberation Mono', monospace;transform:scaleX(0.950);-webkit-text-stroke:0.12px #4a9dc4;">between </span>
<span class="t" style="left:235.13px;top:137px;font-size:7.6px;color:#e3a545;font-family:'Liberation Mono', monospace;transform:scaleX(0.949);-webkit-text-stroke:0.12px #e3a545;">1 </span>
<span class="t" style="left:243.79px;top:137px;font-size:7.6px;color:#4a9dc4;font-family:'Liberation Mono', monospace;transform:scaleX(0.950);-webkit-text-stroke:0.12px #4a9dc4;">AND </span>
<span class="t" style="left:261.11px;top:137px;font-size:7.6px;color:#e3a545;font-family:'Liberation Mono', monospace;transform:scaleX(0.949);-webkit-text-stroke:0.12px #e3a545;">5</span>
<span class="t" style="left:265.44px;top:137px;font-size:7.6px;color:#1c1c1c;font-family:'Liberation Mono', monospace;transform:scaleX(0.949);-webkit-text-stroke:0.12px #1c1c1c;">;</span>
<div style="left:248.3px;top:119.2px;width:0.8px;height:8px;background:#555;"></div>
<span class="t" style="left:160.8px;top:91px;font-size:7.52px;color:#666;font-family:'Liberation Sans', sans-serif;transform:scaleX(1.051);">1</span>
<svg style="left:168.6px;top:91.5px;" width="7" height="7" viewBox="0 0 7 7"><rect x="0.7" y="0.7" width="5.4" height="5.4" fill="#fbe9ea" stroke="#d8475a" stroke-width="1.1"/><path d="M2.3 2.3 L4.5 4.5 M4.5 2.3 L2.3 4.5" stroke="#d8475a" stroke-width="0.8"/></svg>
<span class="t" style="left:160.8px;top:100px;font-size:7.52px;color:#666;font-family:'Liberation Sans', sans-serif;transform:scaleX(1.051);">2</span>
<svg style="left:168.6px;top:100.7px;" width="7" height="7" viewBox="0 0 7 7"><rect x="0.7" y="0.7" width="5.4" height="5.4" fill="#fbe9ea" stroke="#d8475a" stroke-width="1.1"/><path d="M2.3 2.3 L4.5 4.5 M4.5 2.3 L2.3 4.5" stroke="#d8475a" stroke-width="0.8"/></svg>
<span class="t" style="left:160.8px;top:109px;font-size:7.52px;color:#666;font-family:'Liberation Sans', sans-serif;transform:scaleX(1.051);">3</span>
<svg style="left:168.6px;top:109.9px;" width="7" height="7" viewBox="0 0 7 7"><rect x="0.7" y="0.7" width="5.4" height="5.4" fill="#fbe9ea" stroke="#d8475a" stroke-width="1.1"/><path d="M2.3 2.3 L4.5 4.5 M4.5 2.3 L2.3 4.5" stroke="#d8475a" stroke-width="0.8"/></svg>
<span class="t" style="left:160.8px;top:118px;font-size:7.52px;color:#666;font-family:'Liberation Sans', sans-serif;transform:scaleX(1.051);">4</span>
<span class="t" style="left:160.8px;top:128px;font-size:7.52px;color:#666;font-family:'Liberation Sans', sans-serif;transform:scaleX(1.051);">5</span>
<svg style="left:168.6px;top:128.3px;" width="7" height="7" viewBox="0 0 7 7"><rect x="0.7" y="0.7" width="5.4" height="5.4" fill="#fbe9ea" stroke="#d8475a" stroke-width="1.1"/><path d="M2.3 2.3 L4.5 4.5 M4.5 2.3 L2.3 4.5" stroke="#d8475a" stroke-width="0.8"/></svg>
<span class="t" style="left:160.8px;top:137px;font-size:7.52px;color:#666;font-family:'Liberation Sans', sans-serif;transform:scaleX(1.051);">6</span>
<svg style="left:168.6px;top:137.5px;" width="7" height="7" viewBox="0 0 7 7"><rect x="0.7" y="0.7" width="5.4" height="5.4" fill="#fbe9ea" stroke="#d8475a" stroke-width="1.1"/><path d="M2.3 2.3 L4.5 4.5 M4.5 2.3 L2.3 4.5" stroke="#d8475a" stroke-width="0.8"/></svg>
<div style="left:136.5px;top:191px;width:358.8px;height:10px;background:#ececec;"></div>
<svg style="left:140px;top:192.6px;" width="4" height="5" viewBox="0 0 4 5"><path d="M3.3 0.6 L0.6 2.5 L3.3 4.4 Z" fill="#555"/></svg>
<div style="left:147.5px;top:192px;width:83px;height:8.4px;background:linear-gradient(#f2f2f2,#d4d4d4);border:1px solid #b8b8b8;box-sizing:border-box;border-radius:1.5px;"></div>
<div style="left:186.5px;top:194.2px;width:0.8px;height:4px;background:#555;"></div>
<div style="left:188.3px;top:194.2px;width:0.8px;height:4px;background:#555;"></div>
<div style="left:190.1px;top:194.2px;width:0.8px;height:4px;background:#555;"></div>
<svg style="left:488.5px;top:192.2px;" width="4" height="5" viewBox="0 0 4 5"><path d="M0.6 0.6 L3.3 2.5 L0.6 4.4 Z" fill="#555"/></svg>
<div style="left:136.5px;top:201px;width:358.8px;height:3.5px;background:#f4f4f4;"></div>
<div style="left:136.5px;top:201px;width:323px;height:6px;background:#f4f4f4;"></div>
<div style="left:136.5px;top:206.2px;width:323px;height:12.6px;background:#b8c3db;"></div>
<span class="t" style="left:143.6px;top:208px;font-size:7.14px;color:#333;font-family:'Liberation Sans', sans-serif;font-weight:700;transform:scaleX(0.883);">Result Grid</span>
<div style="left:182px;top:208px;width:0.8px;height:9px;background:#a6b2cc;"></div>
<svg style="left:186px;top:208px;" width="9" height="9" viewBox="0 0 9 9"><rect x="0.5" y="0.5" width="8" height="8" fill="#fbf3c4" stroke="#c9a83a" stroke-width="0.9"/><path d="M0.5 3.2 H8.5 M0.5 5.8 H8.5 M4.5 0.5 V8.5" stroke="#c9a83a" stroke-width="0.7"/></svg>
<svg style="left:203px;top:207.6px;" width="11" height="10" viewBox="0 0 11 10"><circle cx="5.5" cy="5" r="4.5" fill="#5b8fd6"/><path d="M2.5 5.2 A3 3 0 0 1 8 3.4 M8.5 4.8 A3 3 0 0 1 3 6.6" stroke="#e8f0fb" stroke-width="1.3" fill="none"/></svg>
<span class="t" style="left:218px;top:208px;font-size:7.14px;color:#333;font-family:'Liberation Sans', sans-serif;font-weight:700;transform:scaleX(0.772);">Filter Rows:</span>
<div style="left:253px;top:206.6px;width:62.8px;height:11.2px;background:#fff;border:1px solid #eef0f5;box-sizing:border-box;"></div>
<div style="left:318.5px;top:208px;width:0.8px;height:9px;background:#a6b2cc;"></div>
<span class="t" style="left:321px;top:208px;font-size:7.14px;color:#333;font-family:'Liberation Sans', sans-serif;transform:scaleX(0.952);-webkit-text-stroke:0.25px #333;">Export:</span>
<svg style="left:346px;top:207.3px;" width="13" height="11" viewBox="0 0 13 11"><rect x="0.5" y="0.5" width="6" height="5" fill="#eef1f6" stroke="#9aa3b3" stroke-width="0.6"/><rect x="4.5" y="2.5" width="7.5" height="7.5" rx="0.8" fill="#5b9bc8" stroke="#3d7aa6" stroke-width="0.8"/><rect x="6" y="3" width="4.4" height="2.6" fill="#e8f0f6"/><rect x="6.6" y="7" width="3.2" height="2.6" fill="#2f5f85"/></svg>
<div style="left:361.5px;top:208px;width:0.8px;height:9px;background:#a6b2cc;"></div>
<span class="t" style="left:365.5px;top:208px;font-size:7.14px;color:#333;font-family:'Liberation Sans', sans-serif;transform:scaleX(0.899);-webkit-text-stroke:0.25px #333;">Wrap Cell Content:</span>
<svg style="left:424.5px;top:208.2px;" width="9" height="9" viewBox="0 0 9 9"><path d="M1 1 H8 M4.5 1 V7 M1.5 8 H7.5 M2.2 5 L1 7 M6.8 5 L8 7" stroke="#555" stroke-width="0.9" fill="none"/></svg>
<svg style="left:446px;top:207.2px;" width="11" height="11" viewBox="0 0 11 11"><rect x="0.6" y="0.6" width="8.8" height="8.6" fill="#e6e9f1" stroke="#4a4f5a" stroke-width="0.9"/><rect x="6.8" y="0.6" width="2.6" height="8.6" fill="#5a5f6a"/></svg>
<div style="left:136.5px;top:218.8px;width:323px;height:160.7px;background:#fff;"></div>
<div style="left:136.5px;top:219.5px;width:152.5px;height:11.3px;background:#f6f6f6;"></div>
<div style="left:136.5px;top:230.8px;width:152.5px;height:0.8px;background:#d0d0d0;"></div>
<div style="left:136.5px;top:231.6px;width:16px;height:68px;background:#f1f1f1;"></div>
<div style="left:152.5px;top:219.5px;width:0.8px;height:80px;background:#d6d6d6;"></div>
<div style="left:200px;top:219.5px;width:0.7px;height:11.3px;background:#d8d8d8;"></div>
<div style="left:249px;top:219.5px;width:0.7px;height:11.3px;background:#d8d8d8;"></div>
<div style="left:289px;top:219.5px;width:0.7px;height:11.3px;background:#d8d8d8;"></div>
<div style="left:153.3px;top:244.39999999999998px;width:135.7px;height:13.6px;background:#e8f0fb;"></div>
<div style="left:153.3px;top:271.59999999999997px;width:135.7px;height:13.6px;background:#e8f0fb;"></div>
<span class="t" style="left:156.7px;top:221px;font-size:7.52px;color:#333;font-family:'Liberation Sans', sans-serif;transform:scaleX(0.966);">title</span>
<span class="t" style="left:204px;top:221px;font-size:7.52px;color:#333;font-family:'Liberation Sans', sans-serif;transform:scaleX(0.897);">expired_date</span>
<span class="t" style="left:254.5px;top:221px;font-size:7.52px;color:#333;font-family:'Liberation Sans', sans-serif;transform:scaleX(0.897);">amount</span>
<span class="t" style="left:154.2px;top:233px;font-size:7.52px;color:#333;font-family:'Liberation Sans', sans-serif;transform:scaleX(0.882);">Exchange</span>
<span class="t" style="left:201.6px;top:233px;font-size:7.52px;color:#333;font-family:'Liberation Sans', sans-serif;transform:scaleX(0.910);">2025-08-16</span>
<span class="t" style="left:252.5px;top:233px;font-size:7.52px;color:#333;font-family:'Liberation Sans', sans-serif;transform:scaleX(0.893);">15.00</span>
<span class="t" style="left:154.2px;top:246px;font-size:7.52px;color:#333;font-family:'Liberation Sans', sans-serif;transform:scaleX(0.906);">Server 2012</span>
<span class="t" style="left:201.6px;top:246px;font-size:7.52px;color:#333;font-family:'Liberation Sans', sans-serif;transform:scaleX(0.910);">2020-10-16</span>
<span class="t" style="left:252.5px;top:246px;font-size:7.52px;color:#333;font-family:'Liberation Sans', sans-serif;transform:scaleX(0.893);">25.00</span>
<span class="t" style="left:154.2px;top:260px;font-size:7.52px;color:#333;font-family:'Liberation Sans', sans-serif;transform:scaleX(0.906);">Server 2016</span>
<span class="t" style="left:201.6px;top:260px;font-size:7.52px;color:#333;font-family:'Liberation Sans', sans-serif;transform:scaleX(0.924);">2001-11-16</span>
<span class="t" style="left:252.5px;top:260px;font-size:7.52px;color:#333;font-family:'Liberation Sans', sans-serif;transform:scaleX(0.891);">263.00</span>
<span class="t" style="left:154.2px;top:274px;font-size:7.52px;color:#333;font-family:'Liberation Sans', sans-serif;transform:scaleX(0.875);">Windows 10</span>
<span class="t" style="left:201.6px;top:274px;font-size:7.52px;color:#333;font-family:'Liberation Sans', sans-serif;transform:scaleX(0.910);">2002-08-16</span>
<span class="t" style="left:252.5px;top:274px;font-size:7.52px;color:#333;font-family:'Liberation Sans', sans-serif;transform:scaleX(0.893);">58.00</span>
<span class="t" style="left:154.2px;top:287px;font-size:7.52px;color:#333;font-family:'Liberation Sans', sans-serif;transform:scaleX(0.873);">Fedora</span>
<span class="t" style="left:201.6px;top:287px;font-size:7.52px;color:#333;font-family:'Liberation Sans', sans-serif;transform:scaleX(0.910);">2001-01-17</span>
<span class="t" style="left:252.5px;top:287px;font-size:7.52px;color:#333;font-family:'Liberation Sans', sans-serif;transform:scaleX(0.893);">15.00</span>
<svg style="left:140.3px;top:236.3px;" width="4" height="6" viewBox="0 0 4 6"><path d="M0.3 0.3 L3.7 3 L0.3 5.7 Z" fill="#111"/></svg>
<div style="left:459.3px;top:204.5px;width:38.5px;height:175px;background:#4a6491;"></div>
<div style="left:459.3px;top:204.5px;width:38.5px;height:41.8px;background:#263a62;"></div>
<div style="left:495.3px;top:204.5px;width:2.5px;height:175px;background:#2c426b;"></div>
<svg style="left:459.3px;top:221.5px;" width="6" height="13" viewBox="0 0 6 13"><path d="M0 0 L5.2 6.5 L0 13 Z" fill="#fff"/></svg>
<svg style="left:471px;top:207.5px;" width="16" height="17" viewBox="0 0 16 17"><rect x="0.6" y="0.6" width="14.6" height="15.6" rx="0.8" fill="#fff" stroke="#e9edf5" stroke-width="0.8"/><path d="M2 3.4 H14 M2 6.2 H14 M2 9 H14 M2 11.8 H14 M2 14.4 H14" stroke="#2a3a5a" stroke-width="1.1"/><path d="M5.6 2.6 V15 M10.2 2.6 V15" stroke="#2a3a5a" stroke-width="0.9"/></svg>
<span class="t" style="left:468.4px;top:227px;font-size:6.58px;color:#f4f6fb;font-family:'Liberation Sans', sans-serif;transform:scaleX(0.879);">Result</span>
<span class="t" style="left:471.3px;top:233px;font-size:6.58px;color:#f4f6fb;font-family:'Liberation Sans', sans-serif;transform:scaleX(0.941);">Grid</span>
<svg style="left:471px;top:249.5px;" width="16" height="17" viewBox="0 0 16 17"><rect x="0.6" y="0.6" width="14.6" height="15.6" fill="none" stroke="#c4cee2" stroke-width="1"/><rect x="2.6" y="2.8" width="10.6" height="3" fill="none" stroke="#c4cee2" stroke-width="0.8"/><path d="M3 8.6 H8 M3 11 H12.6 M3 13.4 H12.6" stroke="#c4cee2" stroke-width="0.9"/><rect x="7" y="7.6" width="6" height="2" fill="#c4cee2"/></svg>
<span class="t" style="left:470.2px;top:268px;font-size:6.58px;color:#e6ebf5;font-family:'Liberation Sans', sans-serif;transform:scaleX(0.918);">Form</span>
<span class="t" style="left:468.7px;top:275px;font-size:6.58px;color:#e6ebf5;font-family:'Liberation Sans', sans-serif;transform:scaleX(0.983);">Editor</span>
<svg style="left:471px;top:291px;" width="19" height="18" viewBox="0 0 19 18"><rect x="0.6" y="0.6" width="14.6" height="16.6" fill="none" stroke="#c4cee2" stroke-width="1"/><path d="M2.6 4 H8 M2.6 7 H8 M2.6 10 H13 M2.6 12.6 H13 M2.6 15 H13" stroke="#c4cee2" stroke-width="0.9"/><circle cx="11.6" cy="4.8" r="3" fill="#4a6491" stroke="#c4cee2" stroke-width="1"/><path d="M13.8 7 L17.6 11" stroke="#c4cee2" stroke-width="1.3"/></svg>
<span class="t" style="left:471.3px;top:311px;font-size:6.58px;color:#e6ebf5;font-family:'Liberation Sans', sans-serif;transform:scaleX(0.876);">Field</span>
<span class="t" style="left:469.3px;top:317px;font-size:6.58px;color:#e6ebf5;font-family:'Liberation Sans', sans-serif;transform:scaleX(0.911);">Types</span>
<svg style="left:471px;top:333.5px;" width="18" height="18" viewBox="0 0 18 18"><rect x="0.6" y="0.6" width="14.6" height="16.6" fill="none" stroke="#c4cee2" stroke-width="1"/><path d="M2.6 4 H8 M2.6 7 H8 M2.6 10 H8 M2.6 12.6 H13 M2.6 15 H13" stroke="#c4cee2" stroke-width="0.9"/><circle cx="12.4" cy="6.6" r="3.6" fill="#4a6491" stroke="#c4cee2" stroke-width="1"/><path d="M12.4 4.6 V6.8 H14" stroke="#c4cee2" stroke-width="0.8" fill="none"/></svg>
<span class="t" style="left:468.5px;top:353px;font-size:6.58px;color:#e6ebf5;font-family:'Liberation Sans', sans-serif;transform:scaleX(0.976);">Query</span>
<span class="t" style="left:471.1px;top:360px;font-size:6.58px;color:#e6ebf5;font-family:'Liberation Sans', sans-serif;transform:scaleX(0.847);">Stats</span>
<svg style="left:471.5px;top:367.5px;" width="12" height="8" viewBox="0 0 12 8"><path d="M1.2 1.4 L6 6 L10.8 1.4" stroke="#eef2f9" stroke-width="2.1" fill="none"/></svg>
<div style="left:136.5px;top:378.5px;width:73.5px;height:13.5px;background:#fff;"></div>
<span class="t" style="left:141px;top:381px;font-size:7.52px;color:#2a2a2a;font-family:'Liberation Sans', sans-serif;transform:scaleX(0.944);">solvetic_mysql 13</span>
<svg style="left:200.5px;top:383.5px;" width="6" height="6" viewBox="0 0 6 6"><path d="M0.8 0.8 L5.2 5.2 M5.2 0.8 L0.8 5.2" stroke="#8a8f9a" stroke-width="0.9" fill="none"/></svg>
<svg style="left:401px;top:382.5px;" width="7" height="7" viewBox="0 0 7 7"><rect x="0.3" y="0.3" width="6.2" height="6.2" rx="1" fill="#3f7fd0" stroke="#8fb6e8" stroke-width="0.6"/><path d="M3.4 1.6 V2.2 M3.4 3 V5.2" stroke="#fff" stroke-width="1"/></svg>
<span class="t" style="left:413.6px;top:381px;font-size:7.52px;color:#0a101f;font-family:'Liberation Sans', sans-serif;transform:scaleX(0.884);-webkit-text-stroke:0.2px #0a101f;">Read Only</span>
<div style="left:497.8px;top:61px;width:238.7px;height:12px;background:linear-gradient(#4a6490,#3a527c);"></div>
<span class="t" style="left:502.3px;top:62px;font-size:7.52px;color:#e3eaf6;font-family:'Liberation Sans', sans-serif;transform:scaleX(0.933);">SQL Additions</span>
<div style="left:497.8px;top:73px;width:238.7px;height:16.6px;background:#b8c3db;"></div>
<svg style="left:506px;top:78px;" width="5" height="6" viewBox="0 0 5 6"><path d="M4.6 0.3 L0.4 3 L4.6 5.7 Z" fill="#9aa4bb"/></svg>
<svg style="left:522px;top:78px;" width="5" height="6" viewBox="0 0 5 6"><path d="M0.4 0.3 L4.6 3 L0.4 5.7 Z" fill="#9aa4bb"/></svg>
<div style="left:535.5px;top:75.5px;width:0.8px;height:11.5px;background:#a6b2cc;"></div>
<svg style="left:540.5px;top:75.5px;" width="11" height="11" viewBox="0 0 11 11"><rect x="0.5" y="0.5" width="9.5" height="10" rx="0.8" fill="#f3f3f3" stroke="#8a8a8a" stroke-width="0.8"/><path d="M3 2.6 V7.8 M3 2.6 H5.2 M6 6 L8.2 8.4 L6.4 8.2 Z" stroke="#444" stroke-width="0.9" fill="#444"/></svg>
<svg style="left:557.5px;top:75.5px;" width="12" height="11" viewBox="0 0 12 11"><rect x="0.5" y="0.5" width="7.5" height="7.5" rx="0.8" fill="#e9d9a8" stroke="#9a8a5a" stroke-width="0.8"/><rect x="4" y="3.6" width="7" height="6.8" rx="0.8" fill="#f3f3f3" stroke="#777" stroke-width="0.8"/><path d="M6 5.4 H9 M6 7.2 H8" stroke="#555" stroke-width="0.8"/></svg>
<div style="left:575px;top:74.8px;width:76.5px;height:13.2px;background:#fff;border:1px solid #eef0f5;box-sizing:border-box;"></div>
<span class="t" style="left:578px;top:77px;font-size:7.52px;color:#222;font-family:'Liberation Sans', sans-serif;transform:scaleX(0.842);">Jump to</span>
<svg style="left:644px;top:79.5px;" width="5" height="4" viewBox="0 0 5 4"><path d="M0.3 0.5 H4.7 L2.5 3.4 Z" fill="#222"/></svg>
<div style="left:497.8px;top:89.6px;width:238.7px;height:289.9px;background:#fff;"></div>
<span class="t" style="left:504.8px;top:98px;font-size:7.91px;color:#b4b4b4;font-family:'DejaVu Sans', 'Liberation Sans', sans-serif;font-weight:700;transform:scaleX(0.896);">Automatic context help is disabled. Use the toolbar to</span>
<span class="t" style="left:504.8px;top:108px;font-size:7.91px;color:#b4b4b4;font-family:'DejaVu Sans', 'Liberation Sans', sans-serif;font-weight:700;transform:scaleX(0.901);">manually get help for the current caret position or to</span>
<span class="t" style="left:504.8px;top:118px;font-size:7.91px;color:#b4b4b4;font-family:'DejaVu Sans', 'Liberation Sans', sans-serif;font-weight:700;transform:scaleX(0.880);">toggle automatic help.</span>
<div style="left:504px;top:138px;width:223.5px;height:0.9px;background:#a0a0a0;"></div>
<div style="left:498.3px;top:378.5px;width:50.3px;height:13.3px;background:#fff;"></div>
<span class="t" style="left:502.3px;top:381px;font-size:7.52px;color:#2d2d2d;font-family:'Liberation Sans', sans-serif;transform:scaleX(0.937);">Context Help</span>
<span class="t" style="left:552.3px;top:381px;font-size:7.52px;color:#e8edf7;font-family:'Liberation Sans', sans-serif;transform:scaleX(0.964);">Snippets</span>
<div style="left:136.5px;top:395px;width:603.5px;height:12.7px;background:linear-gradient(#4a6490,#3a527c);"></div>
<span class="t" style="left:141px;top:398px;font-size:7.99px;color:#e3eaf6;font-family:'Liberation Sans', sans-serif;transform:scaleX(0.876);">Output</span>
<div style="left:136.5px;top:407.7px;width:603.5px;height:17.3px;background:#b8c3db;"></div>
<svg style="left:141.5px;top:411px;" width="10" height="10" viewBox="0 0 10 10"><rect x="3" y="0.6" width="6" height="6.4" fill="#dfe3ec" stroke="#8c92a2" stroke-width="0.8"/><rect x="0.6" y="2.8" width="6" height="6.4" fill="#eef0f5" stroke="#8c92a2" stroke-width="0.8"/></svg>
<div style="left:154px;top:410.5px;width:93.5px;height:13px;background:#fff;border:1px solid #eef0f5;box-sizing:border-box;"></div>
<span class="t" style="left:157px;top:413px;font-size:7.52px;color:#222;font-family:'Liberation Sans', sans-serif;transform:scaleX(0.867);">Action Output</span>
<svg style="left:242px;top:415.5px;" width="5" height="4" viewBox="0 0 5 4"><path d="M0.3 0.5 H4.7 L2.5 3.4 Z" fill="#222"/></svg>
<div style="left:136.5px;top:425px;width:603.5px;height:28px;background:#fff;"></div>
<div style="left:136.5px;top:436.4px;width:603.5px;height:0.6px;background:#efefef;"></div>
<span class="t" style="left:153.5px;top:426px;font-size:6.11px;color:#444;font-family:'Liberation Sans', sans-serif;transform:scaleX(1.174);">#</span>
<span class="t" style="left:176.3px;top:426px;font-size:6.39px;color:#333;font-family:'Liberation Sans', sans-serif;transform:scaleX(0.947);">Time</span>
<span class="t" style="left:208px;top:426px;font-size:6.39px;color:#333;font-family:'Liberation Sans', sans-serif;transform:scaleX(0.988);">Action</span>
<span class="t" style="left:433.6px;top:426px;font-size:6.39px;color:#333;font-family:'Liberation Sans', sans-serif;transform:scaleX(0.904);">Message</span>
<span class="t" style="left:660px;top:426px;font-size:6.39px;color:#333;font-family:'Liberation Sans', sans-serif;transform:scaleX(0.970);">Duration / Fetch</span>
<svg style="left:138.6px;top:439px;" width="9" height="9" viewBox="0 0 9 9"><circle cx="4.3" cy="4.3" r="3.6" fill="#d23a3a" stroke="#a83030" stroke-width="0.6"/><path d="M2.9 2.9 L5.7 5.7 M5.7 2.9 L2.9 5.7" stroke="#fff" stroke-width="1.1"/></svg>
<span class="t" style="left:161.5px;top:438px;font-size:7.52px;color:#333;font-family:'Liberation Sans', sans-serif;transform:scaleX(0.955);">40</span>
<span class="t" style="left:174.6px;top:438px;font-size:7.52px;color:#333;font-family:'Liberation Sans', sans-serif;transform:scaleX(0.895);">17:58:10</span>
<span class="t" style="left:206px;top:438px;font-size:7.52px;color:#333;font-family:'Liberation Sans', sans-serif;transform:scaleX(0.876);">select title, expired_date, amount from solvetic_mysql where id between &#x27;...</span>
<span class="t" style="left:431.7px;top:438px;font-size:7.52px;color:#333;font-family:'Liberation Sans', sans-serif;transform:scaleX(0.876);">Error Code: 1064. You have an error in your SQL syntax; check the manu...</span>
<span class="t" style="left:657.5px;top:438px;font-size:7.52px;color:#333;font-family:'Liberation Sans', sans-serif;transform:scaleX(0.874);">0.000 sec</span>
<div style="left:0px;top:451.6px;width:745px;height:1.4px;background:#3a3d45;"></div>
<div style="left:736.5px;top:56.5px;width:3.5px;height:397px;background:#26375a;"></div>
<svg style="left:704px;top:413px;" width="40" height="40" viewBox="0 0 40 40"><circle cx="18.4" cy="18.6" r="17.6" fill="rgba(255,255,255,0.62)" stroke="rgba(200,210,228,0.5)" stroke-width="0.8"/><path d="M19.6 24.6 C17 21.2 12.6 22.6 10.2 19.2 C7 14.8 6.6 8.6 11.6 4.2 C16.4 0.2 24.2 0.8 27.4 6 C29.8 10 28.6 13.6 27.4 16.6 L29.2 18.4 L26.4 20 C26.2 22 26 23.6 24.6 25 C23 26.6 21.6 27.4 20.2 27.8 C22.8 27 26 26 28.2 26.6 C30.6 27.4 28.4 31.4 22 33.2" fill="none" stroke="rgba(118,140,178,0.85)" stroke-width="1.25" stroke-linecap="round" stroke-linejoin="round"/></svg>
</div></body></html>
